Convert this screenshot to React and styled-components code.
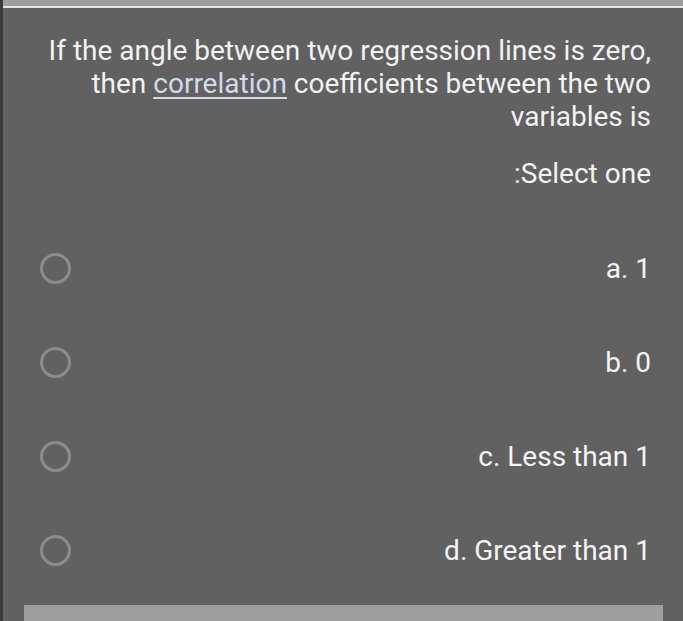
import React from 'react';
import styled, { createGlobalStyle } from 'styled-components';

const options = ['a. 1', 'b. 0', 'c. Less than 1', 'd. Greater than 1'];

const GlobalStyle = createGlobalStyle`
  html, body {
    margin: 0;
    padding: 0;
    background: #616161;
  }
  body {
    font-family: Roboto, "Liberation Sans", sans-serif;
  }
`;

const Page = styled.div`
  width: 683px;
  height: 621px;
  overflow: hidden;
  background: #616161;
  border-left: 3px solid #3a3a3a;
  box-sizing: border-box;
  display: flex;
  flex-direction: column;
`;

const TopStrip = styled.div`
  height: 6px;
  background: #9e9e9e;
  border-bottom: 2px solid #e4e4e4;
  flex-shrink: 0;
`;

const Content = styled.div`
  flex: 1;
  padding: 26px 32px 0 36px;
  display: flex;
  flex-direction: column;
`;

const Question = styled.div`
  color: #f2f2f2;
  font-size: 28px;
  line-height: 33px;
  text-align: right;
`;

const Term = styled.a`
  color: #cfdcea;
  text-decoration: underline;
  text-decoration-thickness: 2px;
  text-underline-offset: 4px;
`;

const Prompt = styled.div`
  color: #f2f2f2;
  font-size: 28px;
  line-height: 33px;
  text-align: right;
  margin-top: 24px;
`;

const OptionList = styled.div`
  display: flex;
  flex-direction: column;
  gap: 63px;
  margin-top: 63px;
`;

const OptionRow = styled.label`
  display: flex;
  align-items: center;
  justify-content: space-between;
  height: 31px;
`;

const Radio = styled.span`
  width: 25px;
  height: 25px;
  border: 3px solid #8c8c8c;
  border-radius: 50%;
  flex-shrink: 0;
  margin-left: 1px;
`;

const OptionText = styled.span`
  color: #f4f4f4;
  font-size: 28px;
  line-height: 31px;
`;

const BottomBar = styled.div`
  height: 16px;
  margin: 0 20px 0 21px;
  background: #9e9e9e;
  flex-shrink: 0;
`;

export default function App() {
  return (
    <>
      <GlobalStyle />
      <Page>
        <TopStrip />
        <Content>
          <Question>
            If the angle between two regression lines is zero, then{' '}
            <Term>correlation</Term> coefficients between the two variables is
          </Question>
          <Prompt>:Select one</Prompt>
          <OptionList>
            {options.map((o) => (
              <OptionRow key={o}>
                <Radio />
                <OptionText>{o}</OptionText>
              </OptionRow>
            ))}
          </OptionList>
        </Content>
        <BottomBar />
      </Page>
    </>
  );
}
